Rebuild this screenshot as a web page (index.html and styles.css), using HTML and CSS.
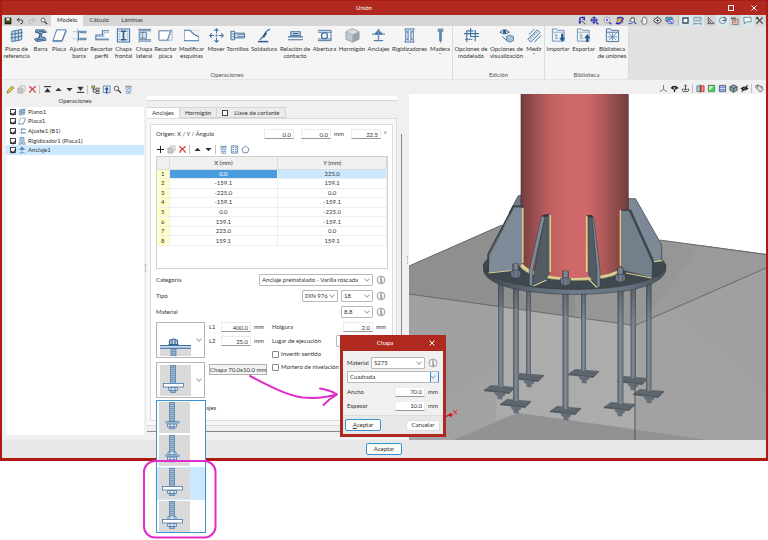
FILE: index.html
```html
<!DOCTYPE html>
<html lang="es">
<head>
<meta charset="utf-8">
<title>Unión</title>
<link rel="stylesheet" href="styles.css">
</head>
<body>
<svg class="defs" aria-hidden="true">
  <defs>
    <pattern id="thread" width="5" height="2" patternUnits="userSpaceOnUse"><rect width="5" height="2" fill="#9fb9d2"/><path d="M0 .5H5" stroke="#5c84ad" stroke-width=".6"/></pattern>
    <symbol id="rod" viewBox="0 0 31 31">
      <rect width="31" height="31" fill="#dadada"/>
      <path d="M4 6h.8M24 4h.8M7 14h.8M26 12h.8M21 19h.8M5 27h.8M25 26h.8M22 9h.8" stroke="#c2c2c2" stroke-width=".8"/>
      <rect x="10.500" y="0" width="5" height="20" fill="url(#thread)" stroke="#4a78a8" stroke-width=".7"/>
    </symbol>
    <symbol id="nut" viewBox="0 0 12 6"><path d="M1.500 .5H10.500V3.500H1.500Z" fill="#dfe9f2" stroke="#4a78a8" stroke-width=".8"/><path d="M4 .5V3.500M8 .5V3.500" stroke="#4a78a8" stroke-width=".8"/><path d="M3.500 3.500H8.500V5.500H3.500Z" fill="#9fb9d2" stroke="#4a78a8" stroke-width=".7"/></symbol>
    <symbol id="nut-up" viewBox="0 0 12 5"><path d="M2 1.500Q6 -.5 10 1.500V4.500H2Z" fill="#dfe9f2" stroke="#4a78a8" stroke-width=".8"/><path d="M4 1V4.500M8 1V4.500" stroke="#4a78a8" stroke-width=".8"/></symbol>
    <symbol id="a-washer" viewBox="0 0 31 31"><use href="#rod"/><rect x="6.500" y="19.500" width="14" height="1.600" rx=".8" fill="#b9cbdc" stroke="#4a78a8" stroke-width=".7"/><use href="#nut" x="7" y="21.500" width="12" height="6"/></symbol>
    <symbol id="a-washer2" viewBox="0 0 31 31"><use href="#rod"/><use href="#nut-up" x="7" y="15.500" width="12" height="5"/><rect x="6.500" y="20" width="14" height="1.600" rx=".8" fill="#b9cbdc" stroke="#4a78a8" stroke-width=".7"/><use href="#nut" x="7" y="21.500" width="12" height="6"/></symbol>
    <symbol id="a-plate" viewBox="0 0 31 31"><use href="#rod"/><rect x="3.500" y="18.500" width="20" height="3.500" fill="#fff" stroke="#4a78a8" stroke-width=".8"/><use href="#nut" x="7" y="22" width="12" height="6"/></symbol>
    <symbol id="a-plate2" viewBox="0 0 31 31"><use href="#rod"/><use href="#nut-up" x="7" y="14" width="12" height="5"/><rect x="3.500" y="18.500" width="20" height="3.500" fill="#fff" stroke="#4a78a8" stroke-width=".8"/><use href="#nut" x="7" y="22" width="12" height="6"/></symbol>
    <symbol id="a-head" viewBox="0 0 31 31"><rect y="22" width="31" height="9" fill="#dadada"/><rect x="11" y="22" width="5" height="9" fill="url(#thread)" stroke="#4a78a8" stroke-width=".7"/><path d="M0 20.500H31V23H0Z" fill="#c9d8e6"/><path d="M0 20.500H31M0 23.300H31" stroke="#3f6ea0" stroke-width="1"/><path d="M9.500 19.500V15.500Q13.500 12.500 17.500 15.500V19.500ZM8.500 19.500H18.500M12 14.500V19M15 14.500V19" fill="#c9d8e6" stroke="#345f8e" stroke-width="1.100"/></symbol>
    <symbol id="i-info" viewBox="0 0 10 10"><circle cx="5" cy="5" r="3.900" fill="#f6f6f6" stroke="#777" stroke-width=".7"/><path d="M4.200 4.300H5.200V7.200M4.200 7.200H6.200" fill="none" stroke="#444" stroke-width=".7"/><circle cx="5" cy="2.900" r=".6" fill="#444"/></symbol>
    <symbol id="i-x" viewBox="0 0 10 10"><path d="M1.500 1.500Q5 4 8.500 8.500M8.500 1.500Q4 4.500 1.500 8.500" fill="none" stroke="#d2504f" stroke-width="1.500"/></symbol>
    <symbol id="i-copy" viewBox="0 0 10 10"><path d="M3.500 1H9V6.500H3.500Z" fill="#f5f5f5" stroke="#aaa" stroke-width=".8"/><path d="M1 3.500H6.500V9H1Z" fill="#c9c9c9" stroke="#a5a5a5" stroke-width=".8"/></symbol>
    <symbol id="i-up" viewBox="0 0 10 10"><path d="M1.500 6.800L5 3L8.500 6.800Z" fill="#333"/></symbol>
    <symbol id="i-down" viewBox="0 0 10 10"><path d="M1.500 3.200L5 7L8.500 3.200Z" fill="#333"/></symbol>
    <symbol id="i-bin" viewBox="0 0 10 10"><path d="M2 2.500L2.800 9.500H7.200L8 2.500Z" fill="#d9e7f8" stroke="#8793a3" stroke-width=".7"/><path d="M1.500 1.500H8.500" stroke="#8793a3" stroke-width="1.200"/><path d="M3.700 5.200L5 3.800L6.300 5M6.300 6.500L5 8L3.700 6.800" fill="none" stroke="#2a6fd6" stroke-width="1"/></symbol>
    <symbol id="i-mag" viewBox="0 0 10 10"><circle cx="3.800" cy="3.800" r="2.500" fill="#eee" stroke="#444" stroke-width=".9"/><path d="M5.700 5.700L9 9" stroke="#333" stroke-width="1.500"/></symbol>
    <symbol id="i-grid" viewBox="0 0 16 16"><path d="M3 3.500L13.500 1.500V12.500L3 14.500ZM6.500 2.800V13.800M10 2.200V13.200M1.500 7L14.500 4.700M1.500 10.800L14.500 8.500" fill="#b4cade" fill-opacity=".6" stroke="#41719f" stroke-width="1"/></symbol>
    <symbol id="i-plate" viewBox="0 0 16 16"><path d="M5 2H15L10.500 13.500H1Z" fill="#fff" stroke="#41719f" stroke-width="1"/><path d="M1 13.500V14.500H10.800L15.300 3.500" fill="none" stroke="#41719f" stroke-width=".7"/></symbol>
    <symbol id="i-adjust" viewBox="0 0 16 16"><path d="M1 4H5M1 11.500H5M6 1V15" fill="none" stroke="#8fadcb" stroke-width="1" stroke-dasharray="2 1"/><path d="M6 3.500H15.500M8 5H15.500M6 12.500H15.500M8 11H15.500M7 3.500V12.500" fill="none" stroke="#41719f" stroke-width="1"/></symbol>
    <symbol id="i-anchor" viewBox="0 0 16 16"><path d="M1 6.500H15M4 6.500L8 2L12 6.500Z" fill="#41719f" stroke="#41719f" stroke-width="1"/><path d="M7.200 1H8.800V13H7.200Z" fill="#6f97be"/><path d="M3 13.500H13" stroke="#41719f" stroke-width="1.200"/></symbol>
    <symbol id="i-stiff" viewBox="0 0 16 16"><path d="M4 1H12V9L14.500 14.500H9.500V12H6.500V14.500H1.500L4 9Z" fill="#dce7f1" stroke="#41719f" stroke-width="1.200"/><path d="M6.500 2V12M9.500 2V12" stroke="#41719f" stroke-width=".8"/></symbol>
  </defs>
</svg>

<div class="stage">
<main class="window">
  <header class="titlebar">
    <h1>Unión</h1>
    <div class="winbtns">
      <button aria-label="Maximizar"><svg viewBox="0 0 10 10"><path d="M2.500 2.500H7.500V7.500H2.500Z" fill="none" stroke="#fff"/></svg></button>
      <button aria-label="Cerrar"><svg viewBox="0 0 10 10"><path d="M2.500 2.500L7.500 7.500M7.500 2.500L2.500 7.500" stroke="#fff"/></svg></button>
    </div>
  </header>

  <div class="quick">
    <div class="qicons">
      <button aria-label="Guardar"><svg viewBox="0 0 10 10"><path d="M1.500 1.500H8.500V8.500H1.500Z" fill="#556b1a" stroke="#111" stroke-width="1.300"/><path d="M3 1.500H7V4H3Z" fill="#eee"/><path d="M3 6H7V8.500H3Z" fill="#222"/></svg></button>
      <button aria-label="Deshacer"><svg viewBox="0 0 10 10"><path d="M4 1L1.500 3.500L4 6M1.500 3.500H6Q9 3.700 8.500 6.500Q8 8.500 5.500 8.500" fill="none" stroke="#333" stroke-width="1.200"/></svg></button>
      <button aria-label="Rehacer"><svg viewBox="0 0 10 10"><path d="M6 1L8.500 3.500L6 6M8.500 3.500H4Q1 3.700 1.500 6.500Q2 8.500 4.500 8.500" fill="none" stroke="#aaa" stroke-width="1"/></svg></button>
      <button aria-label="Buscar"><svg viewBox="0 0 10 10"><use href="#i-mag"/></svg></button>
    </div>
    <nav class="rtabs"><a href="#" class="on">Modelo</a><a href="#">Cálculo</a><a href="#">Láminas</a></nav>
    <div class="vicons">
      <div class="vgroup eight">
        <button aria-label="Vista previa"><svg viewBox="0 0 10 10"><path d="M2 8.500V3.500Q2 1.500 4.500 1.500H7V5" fill="none" stroke="#2329c8" stroke-width="1.500"/><path d="M4 5.500L8.500 9M4.500 3.500H8" stroke="#444" stroke-width="1"/><path d="M.5 5.500L2 8.500L4 6Z" fill="#2329c8"/></svg></button>
        <button aria-label="Ver todo"><svg viewBox="0 0 10 10"><circle cx="4.500" cy="4.500" r="3" fill="#dde" stroke="#555"/><path d="M4.500 .5V8.500M.5 4.500H8.500" stroke="#2329c8" stroke-width="1.400"/><path d="M7 7L9.200 9.200" stroke="#2329c8" stroke-width="1.500"/></svg></button>
        <button aria-label="Ampliar"><svg viewBox="0 0 10 10"><circle cx="4.500" cy="4.500" r="3.400" fill="#f3f3f8" stroke="#888" stroke-width=".8"/><path d="M3 4.500H6M4.500 3V6" stroke="#2329c8" stroke-width=".9"/><path d="M7 7L9.200 9.200" stroke="#2329c8" stroke-width="1.300"/></svg></button>
        <button aria-label="Redibujar"><svg viewBox="0 0 10 10"><path d="M2.500 1.500H8.500V7.500H2.500Z" fill="#f1df62" stroke="#444" stroke-width=".7"/><path d="M1 7.500Q3 9.500 6 8M3 3Q6 0 9 3L6 7" fill="none" stroke="#2329c8" stroke-width="1.500"/><path d="M3 6L7 2.500" stroke="#e27c22" stroke-width="1.200"/></svg></button>
        <button aria-label="Zoom ventana"><svg viewBox="0 0 10 10"><path d="M1 6.500L4 1.500H7V6.500" fill="none" stroke="#777" stroke-width=".8"/><circle cx="5" cy="4.500" r="2.200" fill="#fff" stroke="#444" stroke-width=".9"/><path d="M6.700 6.200L9.200 9" stroke="#3c58bb" stroke-width="1.500"/><path d="M.5 8.500H5" stroke="#3c58bb"/></svg></button>
        <button aria-label="Mano"><svg viewBox="0 0 10 10"><path d="M3 9L1 5.500L2.700 6V2.500L3.800 2V1.500L5 1V1.500L6.200 1.500V2.500L7.500 3V7L6.500 9Z" fill="#f5f5f5" stroke="#555" stroke-width=".8"/></svg></button>
        <button aria-label="Orbitar"><svg viewBox="0 0 10 10"><path d="M5 .8L6.500 2.800L8 3L9.200 5L8 7L6.500 7.200L5 9.200L3.500 7.200L2 7L.8 5L2 3L3.500 2.800Z" fill="#ececec" stroke="#333" stroke-width="1"/><path d="M5 3V7M3 5H7" stroke="#333" stroke-width=".8"/></svg></button>
        <button aria-label="Ventanas"><svg viewBox="0 0 10 10"><path d="M1 1.500H8V6H1Z" fill="#40b8d8" stroke="#556" stroke-width=".8"/><path d="M3.500 4H9V8.500H3.500Z" fill="#fff" stroke="#2a4cc0" stroke-width=".8"/><path d="M4.500 5L8 8" stroke="#2a4cc0" stroke-width="1.200"/></svg></button>
      </div>
      <div class="vgroup seven">
        <button class="lit" aria-label="Marco"><svg viewBox="0 0 10 10"><path d="M2.200 2.200H7.800V7.800H2.200Z" fill="#fff" stroke="#3b4d57" stroke-width="1.500"/></svg></button>
        <button class="lit" aria-label="Cotas"><svg viewBox="0 0 10 10"><path d="M1 1.500H9V5.500H1ZM1 8.500H9M1 7V10M9 7V10M3 3.500H4.500M6 3.500H8" fill="none" stroke="#788790" stroke-width=".9"/></svg></button>
        <button aria-label="Ángulo"><svg viewBox="0 0 10 10"><path d="M1.500 8.500H9L2.500 1.500V8.500M5 8Q5 6 3 5.500" fill="none" stroke="#555" stroke-width="1"/></svg></button>
        <button class="lit" aria-label="Giro"><svg viewBox="0 0 10 10"><circle cx="5" cy="5" r="3.500" fill="none" stroke="#65727a" stroke-width=".8"/><path d="M5 5H9M6.500 1L9 2.500V5" fill="none" stroke="#444" stroke-width=".9"/></svg></button>
        <button aria-label="Portapapeles"><svg viewBox="0 0 10 10"><path d="M1 1.500H6.500V3.500H1Z" fill="#777"/><path d="M3 3.500H9V9.500H3Z" fill="#eac9bd" stroke="#666" stroke-width=".8"/><path d="M4 5H7M4 7H7" stroke="#b45a48" stroke-width=".9"/></svg></button>
        <button class="lit" aria-label="Notas"><svg viewBox="0 0 10 10"><path d="M1 1.500H9V6.500H4L1.500 9V6.500H1Z" fill="#eef6fa" stroke="#66757e" stroke-width=".9"/></svg></button>
        <button aria-label="Opciones"><svg viewBox="0 0 10 10"><path d="M1.500 8.500L8.500 1.500M2 2L8.500 8.500M1 3L3.500 1" fill="none" stroke="#444" stroke-width="1.400"/></svg></button>
      </div>
    </div>
  </div>

  <section class="ribbon">
    <div class="group ops">
      <div class="tools">
        <button><svg viewBox="0 0 16 16"><use href="#i-grid"/></svg>Plano de<br>referencia</button>
        <button><svg viewBox="0 0 16 16"><path d="M3 2H12L14.500 4.500L10 5L8.500 9L13 10.500L14 13L4 14.500L1.500 12L6 10.500L7.500 6L2.500 4.500Z" fill="#9ab4cd" stroke="#2f5c88" stroke-width="1"/><path d="M3 4.500L12 3.500M3 13L12 11.500M8 5.500L6.800 11" stroke="#2f5c88" stroke-width="1"/></svg>Barra</button>
        <button><svg viewBox="0 0 16 16"><use href="#i-plate"/></svg>Placa</button>
        <button><svg viewBox="0 0 16 16"><use href="#i-adjust"/></svg>Ajustar<br>barra</button>
        <button><svg viewBox="0 0 16 16"><path d="M16 3H9V7.500H2V12.500H16" fill="#fff" stroke="#41719f" stroke-width="1.100"/><path d="M16 5H10.500V9H2M2 11H16" fill="none" stroke="#7d9fc0" stroke-width=".8"/></svg>Recortar<br>perfil</button>
        <button><svg viewBox="0 0 16 16"><path d="M1.500 1H14.500V15H1.500Z" fill="#e6eef5" stroke="#41719f" stroke-width="1.100"/><path d="M5 3.500H11M5 12.500H11M8 3.500V12.500" stroke="#2f5c88" stroke-width="1.700"/><path d="M3.500 3V13M12.500 3V13" stroke="#41719f" stroke-width="1" stroke-dasharray="1 2"/></svg>Chapa<br>frontal</button>
        <button><svg viewBox="0 0 16 16"><path d="M2 0V16" stroke="#aabfd3" stroke-width="1"/><path d="M2 3H15M2 12.500H15M2 1.500H15M2 14H15" stroke="#41719f" stroke-width=".9"/><path d="M3 4.500H10V11H3Z" fill="#dce7f1" stroke="#41719f" stroke-width=".9"/><path d="M6 4.500V11" stroke="#222" stroke-width="1.200" stroke-dasharray="1 1.300"/></svg>Chapa<br>lateral</button>
        <button><svg viewBox="0 0 16 16"><path d="M12 3H1V13H10L13.500 3Z" fill="#fff" stroke="#41719f" stroke-width="1"/><path d="M15 3V13H11M15 1L10 15" fill="none" stroke="#7d9fc0" stroke-width="1" stroke-dasharray="2 1"/></svg>Recortar<br>placa</button>
        <button><svg viewBox="0 0 16 16"><path d="M0 2.500H6Q10 7 16 9.500V13.500H0Z" fill="#fff" stroke="#41719f" stroke-width="1.100"/><path d="M7 2.500H16V9" fill="none" stroke="#9db6cf" stroke-width=".8" stroke-dasharray="1.500 1"/></svg>Modificar<br>esquinas</button>
        <button><svg viewBox="0 0 16 16"><path d="M8 1V5.500M8 10.500V15M1 8H5.500M10.500 8H15M5.800 3L8 .8L10.200 3M5.800 13L8 15.200L10.200 13M3 5.800L.8 8L3 10.200M13 5.800L15.200 8L13 10.200" fill="none" stroke="#41719f" stroke-width="1.100"/><path d="M7 7H9V9H7Z" fill="#41719f"/></svg>Mover</button>
        <button><svg viewBox="0 0 16 16"><path d="M1 3.500H5V12.500H1ZM5 5.500H15.500V10.500H5Z" fill="#e2ebf3" stroke="#41719f" stroke-width="1"/><path d="M1 6.500H5M1 9.500H5M9 7H15M9 9H15M8.500 5.500V10.500" stroke="#41719f" stroke-width=".8"/></svg>Tornillos</button>
        <button><svg viewBox="0 0 16 16"><path d="M1 14.500H12" stroke="#2f5c88" stroke-width="1.600"/><path d="M3 13L8 7Q10 2 14 1.500" fill="none" stroke="#41719f" stroke-width="1.300"/><path d="M6.500 10L10 5" stroke="#2f5c88" stroke-width="2.200"/></svg>Soldadura</button>
        <button><svg viewBox="0 0 16 16"><path d="M3 4H13V8H3Z" fill="#dce7f1" stroke="#41719f" stroke-width="1.200"/><path d="M0 9.500H16M0 12.500H16" stroke="#41719f" stroke-width="1.200"/><path d="M5 6H11" stroke="#2f5c88" stroke-width="1.200"/></svg>Relación de<br>contacto</button>
        <button><svg viewBox="0 0 16 16"><path d="M1 2.500H15V13.500H1M1 4.500H15M1 11.700H15" fill="#f8fafc" stroke="#41719f" stroke-width="1"/><circle cx="8" cy="8.200" r="3.200" fill="#f4f4f4" stroke="#41719f" stroke-width="1.300"/></svg>Abertura</button>
        <button><svg viewBox="0 0 16 16"><path d="M8 .8L15 4V12L8 15.200L1 12V4Z" fill="#c3c9ce" stroke="#8d979f" stroke-width=".8"/><path d="M8 7.200L15 4V12L8 15.200Z" fill="#9aa3ab"/><path d="M1 4L8 7.200L15 4L8 .8Z" fill="#dadfe3" stroke="#8d979f" stroke-width=".6"/></svg>Hormigón</button>
        <button><svg viewBox="0 0 16 16"><use href="#i-anchor"/></svg>Anclajes</button>
        <button><svg viewBox="0 0 16 16"><path d="M3 1H13L12 3V13L13 15H3L4 13V3Z" fill="#eef3f8" stroke="#41719f" stroke-width="1"/><path d="M6.500 2V14M9.500 2V14M4.500 3.500L6.500 5M11.500 3.500L9.500 5M4.500 12.500L6.500 11M11.500 12.500L9.500 11" stroke="#41719f" stroke-width="1"/></svg>Rigidizadores<i class="more"></i></button>
        <button><svg viewBox="0 0 16 16"><path d="M5.500 1H10.500V4H5.500Z" fill="#7f9cb8" stroke="#5a7c9e" stroke-width=".7"/><path d="M7 4H9V13L8 15.500L7 13Z" fill="#5a86b3" stroke="#41719f" stroke-width=".6"/></svg>Madera<i class="more"></i></button>
      </div>
      <h2>Operaciones</h2>
    </div>
    <div class="group edit">
      <div class="tools">
        <button><svg viewBox="0 0 16 16"><path d="M3 15V3H10M7 0V9H16M12 14V2M0 6H16M1 12H9" fill="none" stroke="#41719f" stroke-width="1.200"/></svg>Opciones de<br>modelado</button>
        <button><svg viewBox="0 0 16 16"><path d="M1 4.500Q6 -1 11 4.500Q6 8 1 4.500Z" fill="#dfe9f2" stroke="#2f5c88" stroke-width="1"/><circle cx="6" cy="4" r="1.900" fill="#2f5c88"/><path d="M8 9L11.500 7.500L15.500 9V13.500L12 15L8 13.500Z" fill="#a9bfd4" stroke="#41719f" stroke-width=".8"/><path d="M3 9L8 13" stroke="#41719f"/></svg>Opciones de<br>visualización</button>
        <button><svg viewBox="0 0 16 16"><path d="M1 12L11 2L14 5L4 15Z" fill="#dfe9f2" stroke="#41719f" stroke-width="1"/><path d="M3 10L4.500 11.500M5 8L6.500 9.500M7 6L8.500 7.500M9 4L10.500 5.500M2 7L8 1M8 15L15 8" stroke="#41719f" stroke-width="1"/></svg>Medir<i class="more"></i></button>
      </div>
      <h2>Edición</h2>
    </div>
    <div class="group lib">
      <div class="tools">
        <button><svg viewBox="0 0 16 16"><path d="M1.500 1H6L7 2.500H14V14H1.500Z" fill="#f2f5f8" stroke="#6f92b5" stroke-width="1"/><path d="M1.500 4.500H14M4 7L7 9M7 7L4 9M5.500 6V12M4 11H8" stroke="#8aa8c5" stroke-width=".9"/><path d="M12 6V12" stroke="#24578c" stroke-width="2.400"/><path d="M8.800 10.500H15.200L12 15Z" fill="#24578c"/></svg>Importar</button>
        <button><svg viewBox="0 0 16 16"><path d="M1.500 1H6L7 2.500H14V14H1.500Z" fill="#f2f5f8" stroke="#6f92b5" stroke-width="1"/><path d="M1.500 4.500H14M4 7L7 9M7 7L4 9M5.500 6V12M4 11H8" stroke="#8aa8c5" stroke-width=".9"/><path d="M12 10V15" stroke="#24578c" stroke-width="2.400"/><path d="M8.800 11H15.200L12 6.500Z" fill="#24578c"/></svg>Exportar</button>
        <button><svg viewBox="0 0 16 16"><path d="M1.500 1H6L7 2.500H14.500V14.500H1.500Z" fill="#f2f5f8" stroke="#41719f" stroke-width="1"/><path d="M1.500 4.500H14.500" stroke="#41719f"/><path d="M8 5.500V13.500M4 6L12 13M12 6L4 13M3 9.500H13" stroke="#5a86b3" stroke-width=".9"/></svg>Biblioteca<br>de uniones</button>
      </div>
      <h2>Biblioteca</h2>
    </div>
  </section>

  <div class="body">
    <div class="leftside">
      <div class="bar">
        <button aria-label="Editar"><svg viewBox="0 0 10 10"><path d="M1 9L1.800 6.500L6.800 1.200L8.900 3.200L3.700 8.300Z" fill="#e9c24d" stroke="#7d6a35" stroke-width=".8"/></svg></button>
        <button aria-label="Copiar"><svg viewBox="0 0 10 10"><use href="#i-copy"/></svg></button>
        <button aria-label="Borrar"><svg viewBox="0 0 10 10"><use href="#i-x"/></svg></button>
        <span class="sep"></span>
        <button aria-label="Subir al principio"><svg viewBox="0 0 10 10"><path d="M1 1.800H9" stroke="#333" stroke-width="1.200"/><path d="M1.500 8L5 3.200L8.500 8Z" fill="#333"/></svg></button>
        <button aria-label="Subir"><svg viewBox="0 0 10 10"><use href="#i-up"/></svg></button>
        <button aria-label="Bajar"><svg viewBox="0 0 10 10"><use href="#i-down"/></svg></button>
        <button aria-label="Bajar al final"><svg viewBox="0 0 10 10"><path d="M1 8.200H9" stroke="#333" stroke-width="1.200"/><path d="M1.500 2L5 6.800L8.500 2Z" fill="#333"/></svg></button>
        <span class="sep"></span>
        <button aria-label="Árbol"><svg viewBox="0 0 10 10"><path d="M1 1H4V3.500H1Z" fill="#e8e23c" stroke="#333" stroke-width=".7"/><path d="M2.500 3.500V8H5M2.500 5H5" fill="none" stroke="#333" stroke-width=".8"/><path d="M5.500 3.500H9V6H5.500ZM5.500 7H9V9.500H5.500Z" fill="#eee" stroke="#333" stroke-width=".8"/></svg></button>
        <button aria-label="Insertar"><svg viewBox="0 0 10 10"><path d="M1.500 1H9V8.500H1.500Z" fill="#e9f1f9" stroke="#41719f" stroke-width=".8"/><path d="M5.200 9.500V4" stroke="#24578c" stroke-width="1.600"/><path d="M2.800 5L5.200 2L7.600 5Z" fill="#24578c"/></svg></button>
        <button aria-label="Buscar"><svg viewBox="0 0 10 10"><use href="#i-mag"/></svg></button>
        <button aria-label="Vaciar"><svg viewBox="0 0 10 10"><use href="#i-bin"/></svg></button>
      </div>
      <div class="panes">
        <aside class="tree">
          <h3>Operaciones</h3>
          <div class="rows">
            <label><input type="checkbox" class="tick" checked><svg viewBox="0 0 16 16"><use href="#i-grid"/></svg>Plano1</label>
            <label><input type="checkbox" class="tick" checked><svg viewBox="0 0 16 16"><use href="#i-plate"/></svg>Placa1</label>
            <label><input type="checkbox" class="tick" checked><svg viewBox="0 0 16 16"><use href="#i-adjust"/></svg>Ajuste1 (B1)</label>
            <label><input type="checkbox" class="tick" checked><svg viewBox="0 0 16 16"><use href="#i-stiff"/></svg>Rigidizador1 (Placa1)</label>
            <label class="sel"><input type="checkbox" class="tick" checked><svg viewBox="0 0 16 16"><use href="#i-anchor"/></svg>Anclaje1</label>
          </div>
        </aside>
        <span class="grip"></span>
        <section class="editor">
          <div class="strip"></div>
          <div class="tabs">
            <button class="on">Anclajes</button><button>Hormigón</button><label><input type="checkbox" class="tick">Llave de cortante</label>
          </div>
          <div class="page">
            <div class="sheet">
              <div class="line origin">
                <span class="grow">Origen: X / Y / Ángulo</span>
                <input class="num" aria-label="X" value="0.0"><input class="num" aria-label="Y" value="0.0"><span class="unit">mm</span><input class="num" aria-label="Ángulo" value="22.5"><span class="deg">°</span>
              </div>
              <div class="bar inner">
                <button aria-label="Añadir"><svg viewBox="0 0 10 10"><path d="M5 1V9M1 5H9" stroke="#222" stroke-width="1.100"/></svg></button>
                <button aria-label="Copiar"><svg viewBox="0 0 10 10"><use href="#i-copy"/></svg></button>
                <button aria-label="Borrar"><svg viewBox="0 0 10 10"><use href="#i-x"/></svg></button>
                <span class="sep"></span>
                <button aria-label="Subir"><svg viewBox="0 0 10 10"><use href="#i-up"/></svg></button>
                <button aria-label="Bajar"><svg viewBox="0 0 10 10"><use href="#i-down"/></svg></button>
                <span class="sep"></span>
                <button aria-label="Vaciar"><svg viewBox="0 0 10 10"><use href="#i-bin"/></svg></button>
                <button aria-label="Matriz"><svg viewBox="0 0 10 10"><path d="M1.500 1H8.500V9H1.500Z" fill="#eef4fa" stroke="#41719f" stroke-width=".8"/><path d="M3.500 2V8.500M6.500 2V8.500" stroke="#41719f" stroke-width="1.200" stroke-dasharray="1.200 1.200"/></svg></button>
                <button aria-label="Polígono"><svg viewBox="0 0 10 10"><path d="M5 1.200L8.800 4.200L7.500 8.500H2.500L1.200 4.200Z" fill="#fff" stroke="#6b8fb5" stroke-width="1.100"/></svg></button>
              </div>
              <div class="grid">
                <table>
                  <thead><tr><th class="idx"></th><th>X (mm)</th><th>Y (mm)</th></tr></thead>
                  <tbody>
                    <tr class="cur"><th>1</th><td class="cell">0.0</td><td>225.0</td></tr>
                    <tr><th>2</th><td>-159.1</td><td>159.1</td></tr>
                    <tr><th>3</th><td>-225.0</td><td>0.0</td></tr>
                    <tr><th>4</th><td>-159.1</td><td>-159.1</td></tr>
                    <tr><th>5</th><td>0.0</td><td>-225.0</td></tr>
                    <tr><th>6</th><td>159.1</td><td>-159.1</td></tr>
                    <tr><th>7</th><td>225.0</td><td>0.0</td></tr>
                    <tr><th>8</th><td>159.1</td><td>159.1</td></tr>
                  </tbody>
                </table>
              </div>
              <div class="line"><label class="grow" for="cat">Categoría</label><span class="pick w-cat"><select id="cat"><option>Anclaje preinstalado - Varilla roscada</option></select></span><svg class="info" viewBox="0 0 10 10"><use href="#i-info"/></svg></div>
              <div class="line"><label class="grow" for="tipo">Tipo</label><span class="pick w-din"><select id="tipo"><option>DIN 976</option></select></span><span class="pick w-num"><select aria-label="Diámetro"><option>18</option></select></span><svg class="info" viewBox="0 0 10 10"><use href="#i-info"/></svg></div>
              <div class="line"><label class="grow" for="mat">Material</label><span class="pick w-num"><select id="mat"><option>8.8</option></select></span><svg class="info" viewBox="0 0 10 10"><use href="#i-info"/></svg></div>
              <div class="detail">
                <div class="combos">
                  <button class="imgpick" aria-label="Cabeza"><svg viewBox="0 0 31 31"><use href="#a-head"/></svg></button>
                  <button class="imgpick" aria-label="Extremo"><svg viewBox="0 0 31 31"><use href="#a-plate"/></svg></button>
                </div>
                <div class="lens">
                  <div class="field"><label for="l1">L1</label><input class="num" id="l1" value="400.0"><span class="unit">mm</span></div>
                  <div class="field"><label for="l2">L2</label><input class="num" id="l2" value="25.0"><span class="unit">mm</span></div>
                  <button class="chapa">Chapa 70.0x10.0 mm</button>
                </div>
                <div class="opts">
                  <div class="field"><label class="grow" for="hol">Holgura</label><input class="num" id="hol" value="2.0"><span class="unit">mm</span></div>
                  <div class="field"><label class="grow" for="lug">Lugar de ejecución</label><span class="pick w-lug"><select id="lug"></select></span></div>
                  <label class="check"><input type="checkbox" class="box">Invertir sentido</label>
                  <label class="check"><input type="checkbox" class="box">Mortero de nivelación</label>
                </div>
              </div>
              <label class="last"><input type="checkbox" class="box" checked>ajes</label>
            </div>
          </div>
        </section>
      </div>
    </div>
    <span class="grip"></span>
    <div class="view">
      <div class="bar vbar">
        <button aria-label="Ejes"><svg viewBox="0 0 10 10"><path d="M5 1V6L1 8.500M5 6L9 8.500" fill="none" stroke="#5d7f8c" stroke-width="1"/></svg></button>
        <button aria-label="Ver"><svg viewBox="0 0 10 10"><path d="M.5 4.500Q5 -.5 9.500 4.500Q5 8 .5 4.500Z" fill="#222"/><circle cx="5" cy="4.500" r="1.200" fill="#bbb"/><path d="M5 6V9" stroke="#222" stroke-width="1.500"/></svg></button>
        <button aria-label="Girar"><svg viewBox="0 0 10 10"><path d="M5 1V7M3.500 2.500L5 1L6.500 2.500M2 5Q0 8.500 5 8.500Q10 8.500 8 5M3 6H7" fill="none" stroke="#444" stroke-width="1"/></svg></button>
        <span class="sep"></span>
        <button aria-label="Corte"><svg viewBox="0 0 10 10"><path d="M1 2H4.500V8.500H1Z" fill="#b7cbd4" stroke="#46637a" stroke-width=".8"/><path d="M5.500 2H9V8.500H5.500Z" fill="#ff8379" stroke="#b9362f" stroke-width=".9"/><path d="M5 .5V9.500" stroke="#333" stroke-width=".7"/></svg></button>
        <button aria-label="Sección"><svg viewBox="0 0 10 10"><path d="M1.500 1.500H8.500V8.500H1.500Z" fill="#baf3c2" stroke="#3a4a3d" stroke-width=".9"/><path d="M8.500 1.500V8.500H1.500Z" fill="#3bcf57"/></svg></button>
        <button aria-label="Planta"><svg viewBox="0 0 10 10"><path d="M1.500 1.500H8.500V8.500H1.500Z" fill="#cfe0f3" stroke="#3f4c72" stroke-width=".9"/><path d="M1.500 3.500H8.500M1.500 6.500H8.500" stroke="#3a56b5" stroke-width="1"/></svg></button>
        <button aria-label="Sólido"><svg viewBox="0 0 10 10"><path d="M5 .8L9 3V7L5 9.200L1 7V3Z" fill="#8ba1a5" stroke="#3c4648" stroke-width=".9"/><path d="M1 3L5 5L9 3M5 5V9" fill="none" stroke="#3c4648" stroke-width=".8"/></svg></button>
        <button aria-label="Ocultar"><svg viewBox="0 0 10 10"><path d="M.5 5Q5 .5 9.500 5Q5 9.500 .5 5Z" fill="#222"/><circle cx="5" cy="5" r="1.200" fill="#ddd"/><path d="M2 8.500L8.500 1.500" stroke="#222" stroke-width="1.200"/></svg></button>
        <span class="sep"></span>
        <button aria-label="Etiquetas"><svg viewBox="0 0 10 10"><path d="M1 2L4 1L9 6L6 9L1 4ZM3 1V4M6 2L9 4" fill="#ddd" stroke="#555" stroke-width=".9"/></svg></button>
      </div>
      <svg class="scene" viewBox="409 94 357 346" preserveAspectRatio="xMinYMin slice" role="img" aria-label="Modelo 3D">
        <defs>
          <linearGradient id="tube"><stop offset="0" stop-color="#733d3e"/><stop offset=".1" stop-color="#944b4c"/><stop offset=".25" stop-color="#bb5d5e"/><stop offset=".42" stop-color="#cf6969"/><stop offset=".62" stop-color="#cf6868"/><stop offset=".78" stop-color="#ac5859"/><stop offset=".92" stop-color="#854647"/><stop offset="1" stop-color="#713e3f"/></linearGradient>
          <linearGradient id="shaft"><stop offset="0" stop-color="#535b64"/><stop offset=".5" stop-color="#868f99"/><stop offset="1" stop-color="#5b636c"/></linearGradient>
          <linearGradient id="rim"><stop offset="0" stop-color="#3b444d"/><stop offset=".25" stop-color="#5d6874"/><stop offset=".5" stop-color="#6f7c8a"/><stop offset=".8" stop-color="#65717e"/><stop offset="1" stop-color="#475059"/></linearGradient>
          <linearGradient id="shade" x2="0" y2="1"><stop offset="0" stop-color="#30363c" stop-opacity=".5"/><stop offset="1" stop-color="#30363c" stop-opacity="0"/></linearGradient>
          <g id="foot"><path d="M-16 2L-9 -3L15 -1V0L9 6L-16 3.200Z" fill="#5d656d"/><path d="M-16 2L9 5L15 -1" fill="none" stroke="#454c53" stroke-width=".6"/><path d="M-5.500 4L5.500 5L4.500 8L2.500 8.500V11.500L-2.500 11V8L-4.500 7Z" fill="#666e78"/></g>
          <g id="stud"><path d="M-3 -9Q0 -11 3 -9V0H-3Z" fill="url(#shaft)" stroke="#30363c" stroke-width=".5"/><path d="M-5 -2Q0 -4 5 -2V2.500L2.500 5H-2.500L-5 2.500Z" fill="#6d7987" stroke="#30363c" stroke-width=".6"/><path d="M-2 -2V5M2.500 -1.500V5" stroke="#485159" stroke-width=".6"/></g>
        </defs>
        <rect x="409" y="94" width="357" height="346" fill="#fff"/>
        <path d="M409 266L502 225L575 222L660 240L766 254V440H409Z" fill="#a0a0a0"/>
        <path d="M409 266L502 225L575 222L660 240L766 254V268L635 325.500L409 294Z" fill="#969696"/>
        <path d="M409 266L502 225L575 222V317L409 294Z" fill="#8f8f8f"/>
        <path d="M738 280L766 268V254L700 245L660 300L635 325Z" fill="#9a9a9a"/>
        <path d="M496 306L635 325.500L670 310L766 390V440H708L518 413L453 440H409V420L496 370Z" fill="#a2a2a2"/>
        <path d="M500 307L635 325.500V429L518 413L496 420Z" fill="#acacac"/>
        <path d="M453 440L518 413L708 440Z" fill="#929292"/>
        <path d="M409 266L502 225M660 240L766 254.500M409 294L635 325.500L766 268M635 325.500V440" fill="none" stroke="#555" stroke-width=".7"/>
        <g>
          <use href="#foot" x="529" y="376"/><use href="#foot" x="584" y="372"/><use href="#foot" x="633" y="379"/>
          <use href="#foot" x="500" y="388"/><use href="#foot" x="649" y="392"/>
          <use href="#foot" x="516" y="402"/><use href="#foot" x="566" y="409"/><use href="#foot" x="620" y="405"/>
          <rect x="513" y="284" width="6" height="117" fill="url(#shaft)"/><rect x="562.500" y="288" width="6" height="121" fill="url(#shaft)"/><rect x="617.500" y="285" width="6" height="119" fill="url(#shaft)"/>
          <rect x="526" y="283" width="5" height="91" fill="url(#shaft)"/><rect x="581" y="288" width="5" height="83" fill="url(#shaft)"/><rect x="630.500" y="286" width="5.500" height="92" fill="url(#shaft)"/><rect x="498" y="280" width="5.500" height="107" fill="url(#shaft)"/><rect x="646" y="282" width="5.500" height="109" fill="url(#shaft)"/>
          <path d="M498 280H503.500V307H498ZM513 284H519V309H513ZM526 284H531V311H526ZM562.500 288H568.500V316H562.500ZM581 288H586V318H581ZM617.500 286H623.500V323H617.500ZM630.500 284H636V325H630.500ZM646 282H651.500V320H646Z" fill="url(#shade)"/>
        </g>
        <path d="M635 325.500V440" stroke="#555" stroke-width=".5"/>
        <path d="M483.500 264V271Q488 285 525 291Q574 298 625 291Q661 285 665.700 271V264Z" fill="url(#rim)" stroke="#2e353b" stroke-width=".5"/>
        <ellipse cx="574.500" cy="266" rx="91" ry="23.500" fill="#40484f" stroke="#2e353b" stroke-width=".5"/>
        <path d="M521 195L518 196L509 213L521 230Z" fill="#6f7c89" stroke="#333a40" stroke-width=".6"/>
        <path d="M628 198.700H635.500L661.700 245V260L653 261L628 240Z" fill="#7d8996" stroke="#333a40" stroke-width=".7"/>
        <path d="M654 261.500L662 260.500" stroke="#d8cd8e" stroke-width="1.500"/>
        <path d="M519 265Q528 280 575 280.500Q622 280 629 264V258H519Z" fill="#d9cf92" stroke="#8d8558" stroke-width=".4"/>
        <path d="M521 94V262Q532 277 575 278Q618 277 628.300 262V94Z" fill="url(#tube)"/>
        <path d="M521 94V262M628.300 94V210" stroke="#4a2a2b" stroke-width=".6"/>
        <path d="M522.500 207H514L489 256L488.300 273L515 270.500L522.500 263Z" fill="#7f8b99" stroke="#333a40" stroke-width=".6"/>
        <path d="M523 206.500L513.500 206L488 254.500V272" fill="none" stroke="#373f46" stroke-width="1.500"/>
        <path d="M522.800 208V263" stroke="#dccf8f" stroke-width="1.500"/><path d="M488.500 273L512 270.500" stroke="#dccf8f" stroke-width="1"/>
        <path d="M544.500 216L549.500 215V271L546.500 279.500L532 285Z" fill="#525c64" stroke="#2e353b" stroke-width=".5"/>
        <path d="M541.500 216L545 216.500L533 270L532.500 286L529.300 285.500V270Z" fill="#7d8a98" stroke="#2e353b" stroke-width=".5"/>
        <path d="M541.500 216L544.500 214.500L549.500 214.500L546 217Z" fill="#2f363c"/>
        <path d="M550.200 215V272" stroke="#dccf8f" stroke-width="1.700"/><path d="M533 286L546.500 280" stroke="#dccf8f" stroke-width="1.200"/>
        <path d="M586.800 216V272" stroke="#dccf8f" stroke-width="1.800"/>
        <path d="M588 216L592.500 217L597.500 270V287L588.500 275Z" fill="#525c64" stroke="#2e353b" stroke-width=".5"/>
        <path d="M592 217L593.700 217.500L600 271V287.500L597 287L597 271Z" fill="#7d8a98" stroke="#2e353b" stroke-width=".5"/>
        <path d="M586.500 215H591.500L593.700 217.500L588 216.800Z" fill="#2f363c"/><path d="M588.500 279L597 287.500" stroke="#dccf8f" stroke-width="1.200"/>
        <path d="M621.300 210.500H629.500L652.500 262L652 278L621.300 270Z" fill="#73808b" stroke="#333a40" stroke-width=".6"/>
        <path d="M621 209.500H631L654 260.500V276.500L652 278V262L629 211H621Z" fill="#3d464e"/>
        <path d="M620.500 210V266" stroke="#dccf8f" stroke-width="1.600"/><path d="M626 273L651.500 278" stroke="#dccf8f" stroke-width="1.200"/>
        <use href="#stud" x="515.700" y="273"/><use href="#stud" x="565.500" y="280.500"/><use href="#stud" x="620.300" y="277"/>
        <path d="M445 417L451 414" stroke="#c11" stroke-width="1.200"/><circle cx="450.500" cy="415" r="1.800" fill="#c11"/><path d="M453 410L457 414.500M457 410L453 414.500" stroke="#e22" stroke-width="1"/>
      </svg>
    </div>
  </div>
  <footer class="foot"><button class="btn primary">Aceptar</button></footer>
</main>

<form class="dialog">
  <div class="dtitle"><h2>Chapa</h2><button type="button" aria-label="Cerrar"><svg viewBox="0 0 10 10"><path d="M2.500 2.500L7.500 7.500M7.500 2.500L2.500 7.500" stroke="#fff"/></svg></button></div>
  <div class="dbody">
    <div class="line"><label for="dm">Material</label><span class="pick w-dm"><select id="dm"><option>S275</option></select></span><svg class="info" viewBox="0 0 10 10"><use href="#i-info"/></svg></div>
    <span class="pick shape"><select aria-label="Forma"><option>Cuadrada</option></select></span>
    <div class="line"><label class="grow" for="an">Ancho</label><input class="num" id="an" value="70.0"><span class="unit">mm</span></div>
    <div class="line"><label class="grow" for="es">Espesor</label><input class="num" id="es" value="10.0"><span class="unit">mm</span></div>
  </div>
  <div class="dfoot"><button type="button" class="btn primary"><u>A</u>ceptar</button><button type="button" class="btn">Cancelar</button></div>
</form>

<div class="drop" role="listbox" aria-label="Extremo">
  <div role="option"><svg viewBox="0 0 31 31"><use href="#a-washer"/></svg></div>
  <div role="option"><svg viewBox="0 0 31 31"><use href="#a-washer2"/></svg></div>
  <div role="option" class="hot"><svg viewBox="0 0 31 31"><use href="#a-plate"/></svg></div>
  <div role="option"><svg viewBox="0 0 31 31"><use href="#a-plate2"/></svg></div>
</div>
<svg class="ink" viewBox="0 0 768 540" aria-hidden="true"><g fill="none" stroke="#e02cc8" stroke-width="2" stroke-linecap="round" stroke-linejoin="round"><rect x="144" y="461" width="71.500" height="76.500" rx="11"/><path d="M250 376C271 387 289 396 303 397.500C315 398.500 328 397 336 394.500M320 388.500Q330 390 337 394.500Q329 399 323.500 405"/></g></svg>
</div>
</body>
</html>
```
FILE: styles.css
```css
* { box-sizing: border-box; }
body { margin: 0; background: #fff; color: #333; font: 6px/8px Lato, "Open Sans", sans-serif; }
h1, h2, h3 { margin: 0; font: inherit; }
button, input, select { font: inherit; color: inherit; margin: 0; padding: 0; border: 0; background: none; border-radius: 0; }
button { display: block; }
svg { display: block; }
a { color: inherit; text-decoration: none; }
.defs { position: absolute; width: 0; height: 0; }
.stage { position: relative; min-height: 100vh; }

.window { border: 2px solid #ab1a13; border-width: 1px 2px 3px; background: #f0f0f0; }
.titlebar { display: flex; align-items: center; height: 14px; background: #b0291e; color: #fff; }
.titlebar h1 { flex: 1; text-align: center; }
.winbtns { display: flex; gap: 13px; padding-right: 7px; }
.winbtns svg { width: 10px; height: 10px; }

.quick { display: flex; height: 11px; background: #d6d6d6; align-items: stretch; }
.qicons { display: flex; gap: 4px; align-items: center; padding: 0 2px; width: 49px; flex: none; }
.qicons svg { width: 8px; height: 8px; }
.rtabs { display: flex; flex: 1; }
.rtabs a { padding: 1px 6px 0; min-width: 32px; text-align: center; }
.rtabs .on { background: #f5f5f5; }
.vicons { display: flex; align-items: stretch; }
.vgroup { display: flex; }
.vgroup button { flex: 1; display: flex; align-items: center; justify-content: center; }
.vgroup svg { width: 9px; height: 9px; }
.eight { width: 100px; }
.seven { width: 88px; margin-left: 2px; border-left: 1px solid #b5b5b5; }
.lit { background: #d7e9f1; }

.ribbon { display: flex; background: #e1e1e1; border-bottom: 1px solid #e4e4e4; }
.group { background: #f5f5f5; display: flex; flex-direction: column; border-right: 1px solid #dcdcdc; }
.group h2 { text-align: center; color: #555; padding: 11px 0 0; }
.tools { display: grid; height: 34px; }
.tools button { display: flex; flex-direction: column; align-items: center; line-height: 7px; white-space: nowrap; min-width: 0; text-align: center; padding-top: 2px; }
.tools svg { width: 15px; height: 15px; margin-bottom: 2px; flex: none; }
.ops .tools { grid-template-columns: 29px 19px 18px 22px 23px 21px 20px 23px 29px 20px 23px 30px 32px 27px 28px 25px 37px 24px; }
.edit .tools { grid-template-columns: 36px 35px 20px; }
.lib .tools { grid-template-columns: 26px 25px 32px; }
.more { border: 1px solid transparent; border-top-color: #555; margin-top: 1px; }

.body { display: flex; }
.leftside { flex: none; width: 404px; display: flex; flex-direction: column; }
.bar { display: flex; align-items: center; height: 16px; gap: 2px; padding: 3px 4px 0; }
.bar svg { width: 9px; height: 9px; }
.sep { width: 1px; height: 9px; background: #c3c3c3; margin-right: 1px; }
.panes { display: flex; flex: 1; }
.tree { width: 138px; flex: none; margin: 1px 0 5px 4px; background: #fff; }
.tree h3 { text-align: center; background: #f0f0f0; height: 10px; }
.rows { display: grid; grid-auto-rows: 1fr; height: 48px; }
.rows label { display: flex; align-items: center; gap: 2px; padding-left: 4px; }
.rows svg { width: 8px; height: 8px; }
.rows .sel { background: #cce8ff; }
.tick, .box { appearance: none; flex: none; width: 6px; height: 6px; border: 1px solid #444; background: #fff; display: grid; place-items: center; }
.tick:checked::after { content: ""; width: 2px; height: 4px; border: solid #222; border-width: 0 1px 1px 0; rotate: 40deg; }
.box { width: 7px; height: 7px; border-color: #888; border-radius: 1px; }
.box:checked { background: #0067c0; border-color: #0067c0; }
.grip { flex: none; width: 3px; align-self: stretch; display: grid; place-items: center; }
.grip::after { content: ""; width: 1px; height: 8px; border-left: 1px dotted #aaa; }

.editor { flex: 1; min-width: 0; display: flex; flex-direction: column; border-bottom: 1px solid #888; margin: 0 4px 8px 0; padding-right: 5px; background: linear-gradient(#888, #888) right bottom / 1px calc(100% - 38px) no-repeat; }
.strip { height: 5px; background: #fff; border-bottom: 1px solid #d5d5d5; flex: none; }
.tabs { display: flex; margin-top: 6px; height: 11px; flex: none; }
.tabs > * { border: 1px solid #d4d4d4; border-left-width: 0; background: #ebebeb; padding: 0 5px; display: flex; align-items: center; gap: 6px; white-space: nowrap; }
.tabs .on { background: #fff; border-bottom-color: #fff; }
.page { border: 1px solid #dcdcdc; border-left: 0; background: #f8f8f8; padding: 5px 3px 4px; }
.sheet { background: #fff; border: 1px solid #dcdcdc; padding: 3px 3px 8px 5px; }
.line { display: flex; align-items: center; height: 12px; }
.grow { flex: 1; }
.sheet > .line { margin-bottom: 4px; gap: 3px; }
.num { width: 30px; height: 10px; border: 1px solid #ececec; border-bottom-color: #999; background: #fff; text-align: right; padding-right: 2px; }
.unit { width: 16px; padding-left: 3px; }
.origin .num + .num { margin-left: 7px; }
.sheet > .origin { gap: 0; margin-bottom: 3px; }
.origin .unit { width: 20px; }
.deg { width: 8px; padding-left: 3px; }
.inner { height: 13px; padding: 0; }
.grid { border: 1px solid #cfcfcf; height: 113px; margin-right: 1px; margin-bottom: 5px; }
table { border-collapse: collapse; width: 100%; height: 89px; table-layout: fixed; text-align: center; }
th, td { padding: 0; font-weight: 400; line-height: 8px; border: 1px solid #eee; border-width: 0 1px 1px 0; }
thead th { background: #f0f0f0; height: 12px; border-color: #dcdcdc; }
.idx { width: 12px; }
tbody th { background: #ffffc8; }
.cur td { background: #cce8ff; }
.cur .cell { background: #4a9de0; color: #fff; }
.pick { display: flex; align-items: center; height: 12px; border: 1px solid #b9b9b9; border-radius: 1px; background: #fff; }
.pick select { appearance: none; width: 100%; height: 10px; padding-left: 2px; white-space: nowrap; }
.pick::after, .imgpick::after { content: ""; flex: none; width: 3px; height: 3px; border: solid #aaa; border-width: 0 1px 1px 0; rotate: 45deg; margin: -2px 3px 0 -7px; }
.w-cat { width: 114px; }
.w-din { width: 36px; }
.w-num { width: 32px; }
.w-lug { width: 53px; }
.w-dm { width: 54px; }
.info { width: 10px; height: 10px; }
.sheet .info { margin-right: 3px; }
.detail { display: flex; margin-top: 4px; }
.combos { display: grid; gap: 4px; }
.imgpick { display: flex; align-items: center; justify-content: space-between; width: 49px; height: 36px; padding-left: 3px; border: 1px solid #b5b5b5; background: #fff; }
.imgpick svg { width: 31px; height: 31px; }
.lens { margin-left: 4px; width: 58px; }
.field { display: flex; align-items: center; height: 10px; margin-bottom: 4px; }
.lens .field label { width: 12px; }
.chapa { border: 1px solid #b0b0b0; background: #f4f4f4; height: 11px; width: 58px; margin-top: 18px; white-space: nowrap; }
.opts { flex: 1; margin-left: 5px; }
.opts .pick { margin-left: auto; }
.check { display: flex; align-items: center; gap: 2px; height: 8px; }
.check + .check { margin-top: 5px; }
.last { display: flex; align-items: center; gap: 43px; margin-top: 6px; height: 8px; }

.view { flex: 1; min-width: 0; }
.vbar { justify-content: flex-end; height: 14px; padding: 2px 2px 0; }
.scene { width: 100%; height: auto; }
.foot { display: flex; justify-content: center; height: 18px; background: #e8e8e8; align-items: center; }
.btn { border: 1px solid #ddd; border-radius: 2px; background: #fdfdfd; width: 34px; height: 11px; }
.primary { border-color: #3c93d4; width: 36px; height: 12px; }

.dialog { position: absolute; left: 340px; top: 335px; width: 106px; border: solid #b0291e; border-width: 0 3px 3px; background: #f0f0f0; }
.dtitle { display: flex; align-items: center; height: 16px; background: #b0291e; color: #fff; }
.dtitle h2 { flex: 1; text-align: center; }
.dtitle svg { width: 10px; height: 10px; margin-right: 6px; }
.dbody { padding: 6px 4px 4px; display: grid; gap: 3px; }
.dbody .line { height: 11px; }
.dbody .pick + .info { margin-left: 3px; }
.dbody label { min-width: 24px; }
.dbody .unit { width: 14px; }
.shape::after { margin-right: 2px; }
.shape { background: linear-gradient(90deg, #fff 0 calc(100% - 8px), #3c93d4 0 calc(100% - 7px), #e5f1fb 0); border-right-color: #3c93d4; }
.dfoot { display: flex; justify-content: space-between; align-items: center; height: 19px; padding: 0 3px 0 2px; background: #e8e8e8; border-top: 1px solid #ddd; }

.drop { position: absolute; left: 156px; top: 400px; width: 50px; border: 1px solid #3c93d4; background: #fff; }
.drop div { padding: 1px 2px; }
.drop div:last-child { padding-bottom: 0; }
.drop svg { width: 31px; height: 31px; }
.drop .hot { background: #cce8ff; }
.ink { position: absolute; left: 0; top: 0; width: 768px; height: 540px; pointer-events: none; }
```
